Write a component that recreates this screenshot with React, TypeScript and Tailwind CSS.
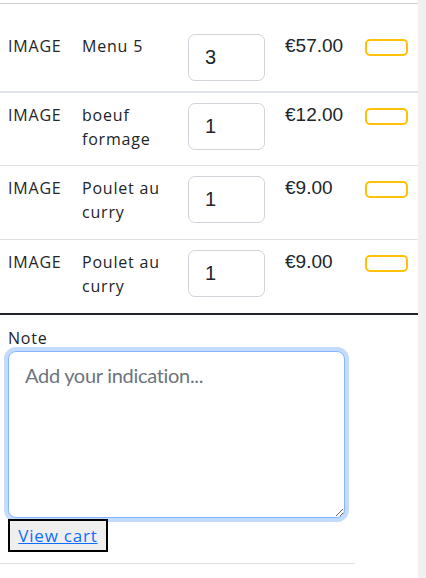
import React from 'react';

interface CartLine {
  name: string;
  qty: number;
  price: string;
}

const lines: CartLine[] = [
  { name: 'Menu 5', qty: 3, price: '€57.00' },
  { name: 'boeuf formage', qty: 1, price: '€12.00' },
  { name: 'Poulet au curry', qty: 1, price: '€9.00' },
  { name: 'Poulet au curry', qty: 1, price: '€9.00' },
];

const CartRow: React.FC<{ line: CartLine; className: string }> = ({ line, className }) => (
  <div className={`grid grid-cols-[74px_106px_97px_80px_61px] ${className}`}>
    <div className="px-2 leading-6">IMAGE</div>
    <div className="px-2 leading-6">{line.name}</div>
    <div className="px-2">
      <input
        type="text"
        defaultValue={line.qty}
        className="block h-[47px] w-[77px] rounded-[7px] border border-[#ced4da] bg-white px-4 font-['Liberation_Sans',Arial,sans-serif] text-[20px] tracking-normal text-[#212529] outline-none"
      />
    </div>
    <div className="px-2 font-['Liberation_Sans',Arial,sans-serif] text-[19px] leading-6 tracking-normal">{line.price}</div>
    <div className="px-2">
      <button type="button" className="mt-[5px] block h-[17px] w-[43px] rounded-[5px] border-2 border-[#ffc107] bg-transparent" />
    </div>
  </div>
);

export default function App() {
  return (
    <div className="flex h-[578px] w-[426px] overflow-hidden bg-white font-['Open_Sans',sans-serif] text-[16px] tracking-[0.8px] text-[#212529]">
      <div className="w-[418px] shrink-0">
        <div className="h-[3px]" />
        <div className="border-t border-[#cdd1d5]">
          <CartRow line={lines[0]} className="pt-[30px] pb-[10px]" />
          <CartRow line={lines[1]} className="border-t-2 border-[#dee2e6] pt-[10px] pb-[14px]" />
          <CartRow line={lines[2]} className="border-t border-[#dee2e6] pt-[10px] pb-[15px]" />
          <CartRow line={lines[3]} className="border-t border-[#dee2e6] pt-[10px] pb-[15px]" />
        </div>
        <div className="border-t-2 border-[#212529]" />

        <div className="w-[355px] pt-[11px]">
          <label className="block px-2 leading-6">Note</label>
          <div className="mt-px px-2">
            <textarea
              placeholder="Add your indication..."
              className="block h-[167px] w-[337px] rounded-lg border border-[#86b7fe] bg-white px-4 py-2 font-['Lato',sans-serif] text-[20px] leading-[30px] tracking-[-0.3px] text-[#212529] shadow-[0_0_0_4px_rgba(13,110,253,0.25)] outline-none placeholder:text-[#6c757d]"
            />
            <button type="button" className="mt-px flex h-[33px] w-[100px] items-center justify-center border-2 border-black bg-[#efefef]">
              <a href="#" className="text-[17px] leading-6 tracking-[0.8px] text-[#0d6efd] underline">View cart</a>
            </button>
          </div>
          <hr className="mt-[11px] border-t border-[#dedede]" />
        </div>
      </div>
      <div className="h-full w-[8px] bg-[#f0f0f0]" />
    </div>
  );
}
